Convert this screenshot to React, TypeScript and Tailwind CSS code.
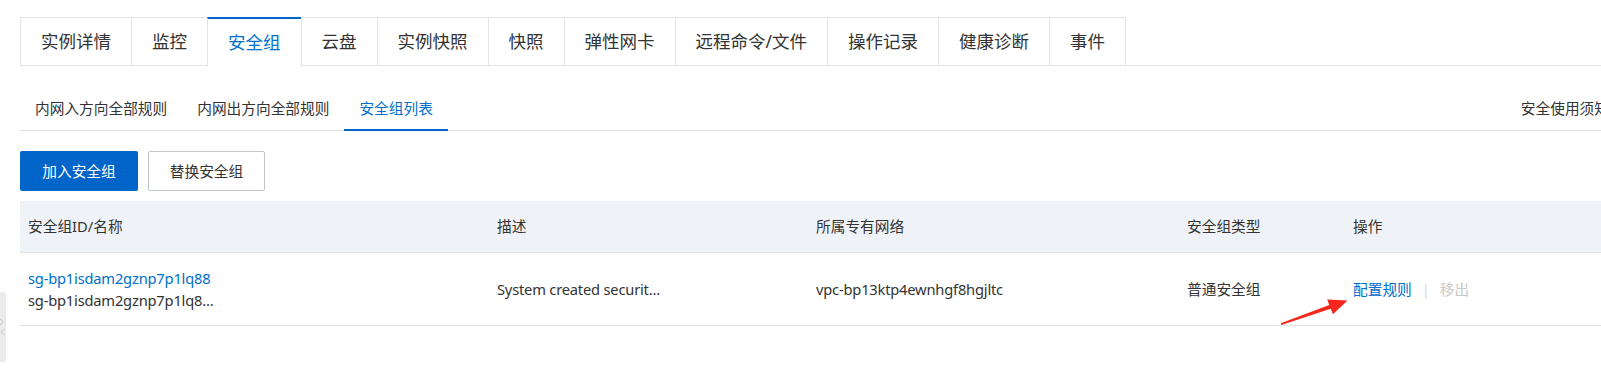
import clsx from "clsx";

const tabs = [
  "实例详情",
  "监控",
  "安全组",
  "云盘",
  "实例快照",
  "快照",
  "弹性网卡",
  "远程命令/文件",
  "操作记录",
  "健康诊断",
  "事件",
];

const subTabs = ["内网入方向全部规则", "内网出方向全部规则", "安全组列表"];

const cols = "grid grid-cols-[469px_319px_371px_166px_1fr] items-center";

export default function App() {
  return (
    <div className="relative h-[368px] w-full overflow-hidden bg-white font-['Noto_Sans','Noto_Sans_CJK_SC',sans-serif] text-[#333]">
      <div className="w-[1620px] pl-5 pt-[17px]">
        {/* top tabs */}
        <div className="flex items-start border-b border-[#e3e3e3]">
          {tabs.map((t, i) => {
            const active = t === "安全组";
            return (
              <div
                key={t}
                className={clsx(
                  "flex items-center border-l border-[#e3e3e3] px-5 text-[17.5px] leading-none whitespace-nowrap",
                  active
                    ? "relative z-10 -mb-px h-[49px] border-t-2 border-t-[#0064c8] bg-white text-[#0070cc]"
                    : "h-[48px] border-t bg-white",
                  i === tabs.length - 1 && "border-r"
                )}
              >
                {t}
              </div>
            );
          })}
        </div>

        {/* sub tabs */}
        <div className="mt-5 flex h-[45px] items-stretch border-b border-[#e3e3e3] text-[14.7px]">
          {subTabs.map((t) => {
            const active = t === "安全组列表";
            return (
              <div
                key={t}
                className={clsx(
                  "flex items-center px-[15px] whitespace-nowrap",
                  active && "-mb-px border-b-2 border-[#0064c8] pt-[2px] text-[#0070cc]"
                )}
              >
                {t}
              </div>
            );
          })}
          <div className="ml-auto flex items-center pr-[11px] whitespace-nowrap">安全使用须知</div>
        </div>

        {/* buttons */}
        <div className="mt-5 flex gap-[10px] text-[14.7px]">
          <button className="h-10 w-[118px] rounded-[2px] bg-[#0064c8] text-white">加入安全组</button>
          <button className="h-10 w-[117px] rounded-[2px] border border-[#c0c6cc] bg-white text-[#333]">
            替换安全组
          </button>
        </div>

        {/* table */}
        <div className="mt-[10px] text-[14.7px]">
          <div className={clsx(cols, "h-[52px] border-b border-[#dfe3e8] bg-[#eff3f8]")}>
            <div className="pl-2">安全组ID/名称</div>
            <div className="pl-2">描述</div>
            <div className="pl-2">所属专有网络</div>
            <div className="pl-2">安全组类型</div>
            <div className="pl-2">操作</div>
          </div>
          <div className={clsx(cols, "h-[73px] border-b border-[#e3e3e3]")}>
            <div className="pl-2 leading-[22.5px] tracking-[-0.2px]">
              <div className="text-[#0070cc]">sg-bp1isdam2gznp7p1lq88</div>
              <div>sg-bp1isdam2gznp7p1lq8...</div>
            </div>
            <div className="pl-2 tracking-[-0.2px]">System created securit...</div>
            <div className="pl-2 tracking-[-0.2px]">vpc-bp13ktp4ewnhgf8hgjltc</div>
            <div className="pl-2">普通安全组</div>
            <div className="flex items-center pl-2">
              <span className="text-[#0070cc]">配置规则</span>
              <span className="px-[10px] text-[#d5d5d5]">|</span>
              <span className="text-[#c8c8c8]">移出</span>
            </div>
          </div>
        </div>
      </div>

      {/* collapsed side handle */}
      <div className="absolute left-0 top-[292px] flex h-[70px] w-[6px] flex-col items-center justify-center rounded-r-[3px] bg-[#ebebeb]">
        <svg width="6" height="22" viewBox="0 0 6 22" fill="none" stroke="#c4c4c4" strokeWidth="1">
          <path d="M0 3 L3.5 6 L0 9" />
          <path d="M4.5 13 L1 16 L4.5 19" />
        </svg>
      </div>

      {/* red annotation arrow */}
      <svg className="pointer-events-none absolute left-0 top-0" width="1601" height="368">
        <polygon
          fill="#f5261b"
          points="1280.8,323.3 1329.3,305 1327.2,299.6 1347.5,300.6 1333,314.2 1330.7,308.8 1281.4,325"
        />
      </svg>
    </div>
  );
}
